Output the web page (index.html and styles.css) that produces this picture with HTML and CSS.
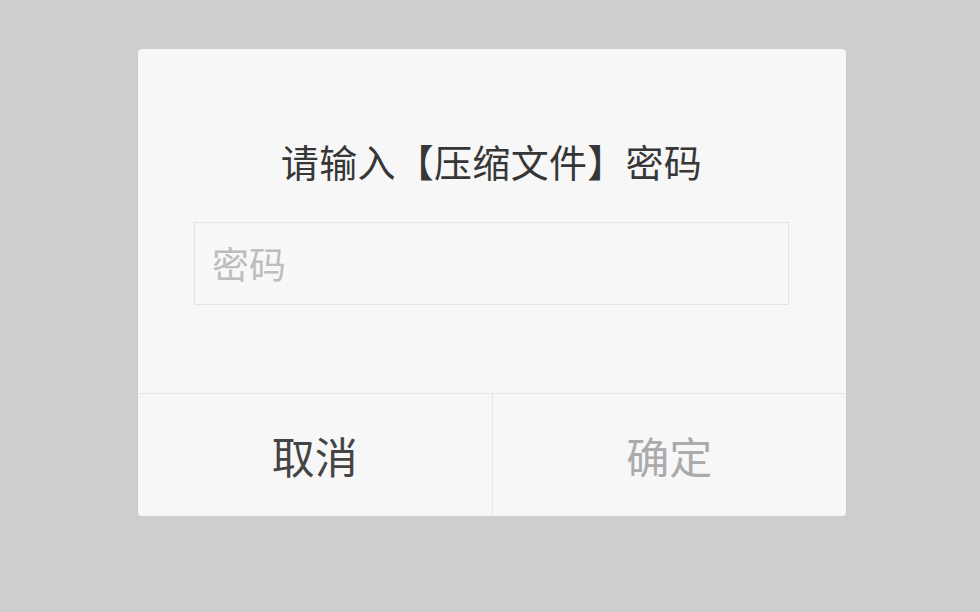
FILE: index.html
```html
<!DOCTYPE html>
<html lang="zh-CN">
<head>
<meta charset="utf-8">
<title>密码</title>
<link rel="stylesheet" href="styles.css">
</head>
<body>
<div class="dialog">
  <div class="content">
    <div class="title">请输入【压缩文件】密码</div>
    <div class="input"><span class="placeholder">密码</span></div>
  </div>
  <div class="actions">
    <div class="btn cancel">取消</div>
    <div class="btn ok">确定</div>
  </div>
</div>
</body>
</html>
```
FILE: styles.css
```css
html, body {
  margin: 0;
  padding: 0;
  background: #cecece;
  width: 980px;
  height: 612px;
  overflow: hidden;
}
body {
  padding: 49px 0 0 138px;
  box-sizing: border-box;
  font-family: "Noto Sans CJK SC", "Noto Sans", sans-serif;
}
.dialog {
  width: 708px;
  height: 467px;
  background: #f7f7f7;
  border-radius: 4px;
  display: flex;
  flex-direction: column;
  overflow: hidden;
}
.content {
  height: 345px;
  padding: 93px 57px 0 56px;
  box-sizing: border-box;
  display: flex;
  flex-direction: column;
  border-bottom: 1px solid #e6e6e6;
}
.title {
  font-size: 38px;
  line-height: 38px;
  color: #363636;
  text-align: center;
  white-space: nowrap;
  letter-spacing: 0.3px;
}
.input {
  margin-top: 42px;
  height: 83px;
  box-sizing: border-box;
  border: 1px solid #e4e4e4;
  background: #f8f8f8;
  display: flex;
  align-items: center;
  padding-left: 17px;
}
.placeholder {
  font-size: 37px;
  line-height: 37px;
  color: #bdbdbd;
}
.actions {
  flex: 1;
  display: flex;
}
.btn {
  flex: 1;
  display: flex;
  align-items: center;
  justify-content: center;
  font-size: 43px;
  line-height: 43px;
  box-sizing: border-box;
}
.cancel {
  color: #444444;
}
.ok {
  color: #ababab;
  border-left: 1px solid #e6e6e6;
}
```
